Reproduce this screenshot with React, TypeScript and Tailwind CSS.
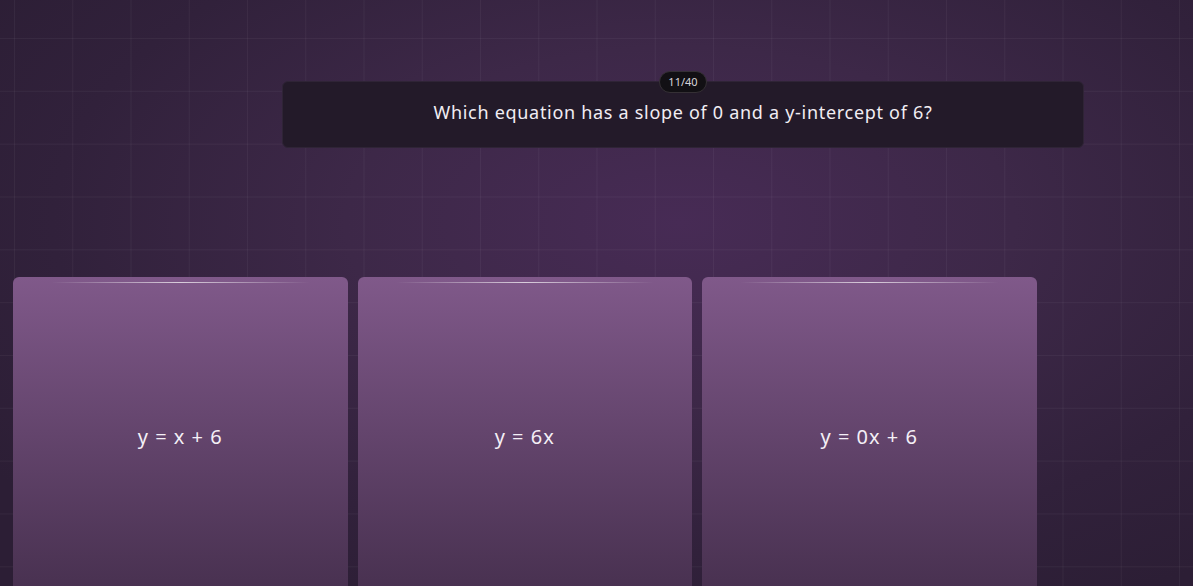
import React from "react";

const answers = ["y = x + 6", "y = 6x", "y = 0x + 6"];

export default function App() {
  return (
    <div
      className="relative h-[586px] w-full overflow-hidden bg-[radial-gradient(ellipse_70%_75%_at_57%_38%,#472b55_0%,#3d2848_40%,#31213b_75%,#2c1e35_100%)]"
      style={{ fontFamily: "'Noto Sans', 'Open Sans', sans-serif" }}
    >
      <div className="pointer-events-none absolute inset-0 bg-[linear-gradient(to_right,rgba(255,255,255,0.045)_1px,transparent_1px),linear-gradient(to_bottom,rgba(255,255,255,0.045)_1px,transparent_1px)] bg-[size:58.25px_52.84px] bg-[position:14px_38px]" />
      <div className="relative flex flex-col">
        <div className="pl-[282px] pt-[81px]">
          <div className="relative flex h-[67px] w-[802px] items-start justify-center rounded-[6px] border border-[#2f2436] bg-[#231a29] pt-[18px]">
            <div className="absolute left-1/2 top-0 flex h-[22px] w-[48px] -translate-x-1/2 -translate-y-1/2 items-center justify-center rounded-full border border-[#353035] bg-[#121014] text-[11px] text-[#d8d4da]">
              11/40
            </div>
            <p className="text-[18px] leading-[24px] tracking-[0.7px] text-[#f1edf3]">
              Which equation has a slope of 0 and a y-intercept of 6?
            </p>
          </div>
        </div>
        <div className="mt-[129px] flex gap-[10px] pl-[13px]">
          {answers.map((a) => (
            <div
              key={a}
              className="relative flex h-[320px] w-[334.5px] items-center justify-center rounded-t-[6px] bg-gradient-to-b from-[#80598a] to-[#47304f]"
            >
              <div className="absolute left-[38px] right-[38px] top-[5px] h-px bg-gradient-to-r from-transparent via-[rgba(255,255,255,0.7)] to-transparent" />
              <span className="text-[20px] tracking-[1px] text-[#f4eff6]">{a}</span>
            </div>
          ))}
        </div>
      </div>
    </div>
  );
}
